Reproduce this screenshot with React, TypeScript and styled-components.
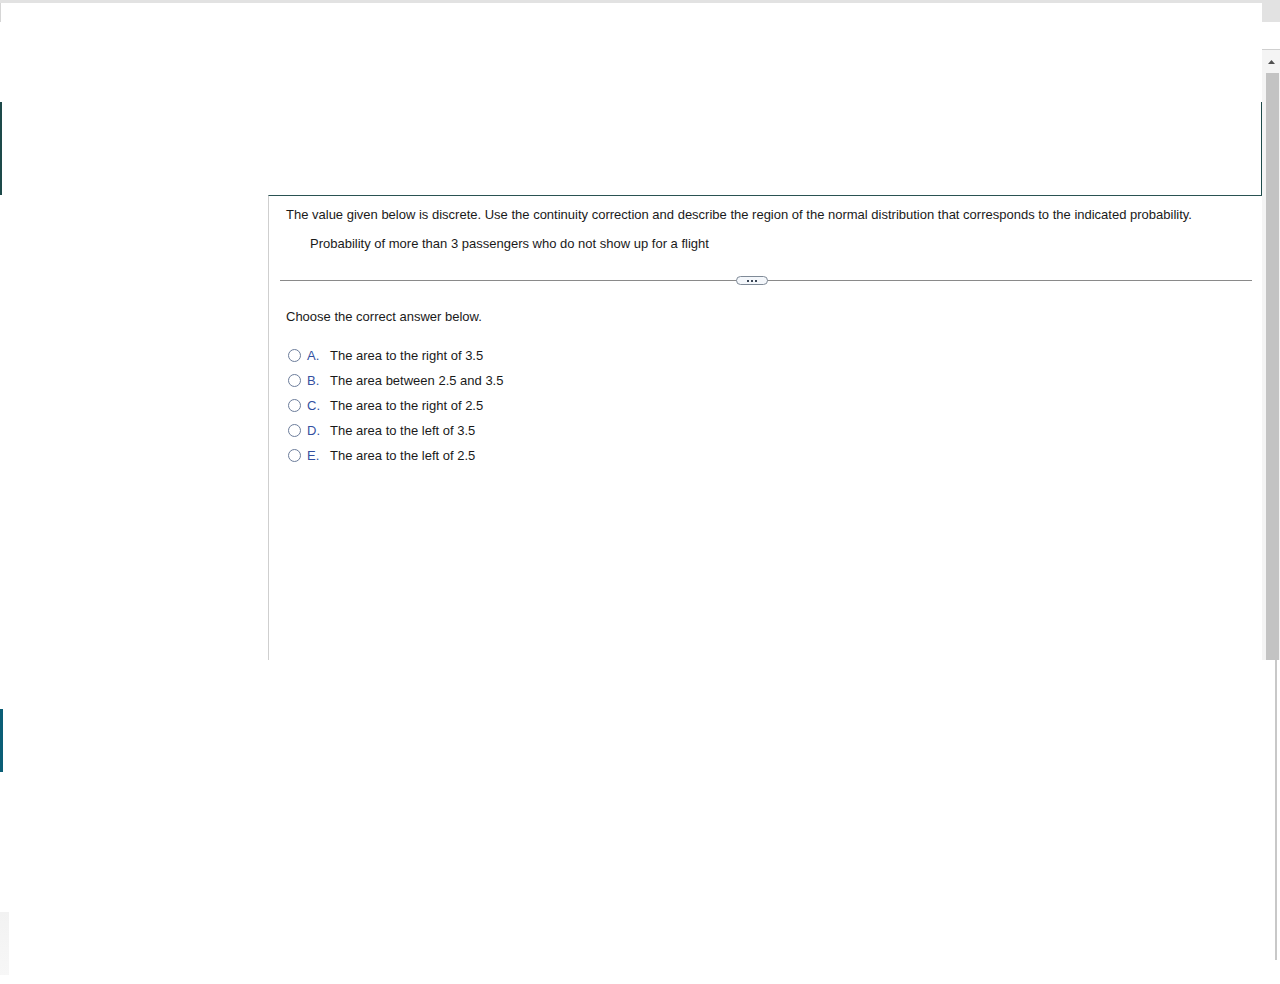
import React from 'react';
import styled, { createGlobalStyle } from 'styled-components';

const GlobalStyle = createGlobalStyle`
  html, body {
    margin: 0;
    padding: 0;
    background: #fff;
    overflow: hidden;
  }
  body {
    font-family: "Liberation Sans", Arial, sans-serif;
  }
`;

const Page = styled.div`
  display: flex;
  width: 1280px;
  height: 984px;
  overflow: hidden;
`;

const Main = styled.div`
  width: 1262px;
  display: flex;
  flex-direction: column;
`;

const TopStrip = styled.div`
  height: 3px;
  background: #e2e2e2;
`;

const HeaderSpace = styled.div`
  height: 99px;
`;

const LeftNotch = styled.div`
  width: 1px;
  height: 19px;
  background: #d6d6d6;
`;

const FrameBox = styled.div`
  height: 93px;
  border-left: 2px solid #1d4a4a;
  border-right: 1px solid #1d4a4a;
`;

const QuestionPanel = styled.div`
  box-sizing: border-box;
  margin-left: 268px;
  height: 465px;
  border-top: 1px solid #2a5252;
  border-left: 1px solid #cfcfcf;
  padding: 12px 10px 0 11px;
  color: #1a1a1a;
  font-size: 13px;
`;

const Prompt = styled.p`
  margin: 0 0 0 6px;
  line-height: 14px;
`;

const Detail = styled.p`
  margin: 15px 0 0 30px;
  line-height: 14px;
`;

const Divider = styled.div`
  position: relative;
  margin-top: 29px;
  height: 1px;
  background: #8a8a8a;
`;

const MoreButton = styled.div`
  position: absolute;
  left: 456px;
  top: -4px;
  width: 30px;
  height: 7px;
  border: 1px solid #7f8a97;
  border-radius: 5px;
  background: #f4f7fb;
  display: flex;
  align-items: center;
  justify-content: center;
  gap: 2px;
`;

const Dot = styled.span`
  width: 2px;
  height: 2px;
  background: #3b4656;
`;

const Instruction = styled.p`
  margin: 29px 0 0 6px;
  line-height: 14px;
`;

const OptionList = styled.div`
  margin-top: 24px;
  margin-left: 8px;
  display: flex;
  flex-direction: column;
  gap: 11px;
`;

const OptionRow = styled.label`
  display: flex;
  align-items: center;
  height: 14px;
`;

const Radio = styled.span`
  width: 11px;
  height: 11px;
  border: 1px solid #6c7d9b;
  border-radius: 50%;
  margin-right: 6px;
  background: #fff;
`;

const Letter = styled.span`
  width: 23px;
  color: #34509f;
`;

const TealMark = styled.div`
  margin-top: 49px;
  width: 3px;
  height: 63px;
  background: #0b5e76;
`;

const GreyBlock = styled.div`
  margin-top: 140px;
  width: 9px;
  height: 63px;
  background: linear-gradient(#f2f2f2, #f7f7f7);
`;

const ScrollColumn = styled.div`
  width: 18px;
  display: flex;
  flex-direction: column;
`;

const ScrollTop = styled.div`
  height: 22px;
  background: #e2e2e2;
`;

const ScrollGap = styled.div`
  height: 27px;
`;

const ScrollTrack = styled.div`
  border-top: 1px solid #cfcfcf;
  background: #f4f4f4;
  height: 610px;
  display: flex;
  flex-direction: column;
  align-items: center;
`;

const ArrowButton = styled.div`
  height: 23px;
  display: flex;
  align-items: center;
  justify-content: center;
`;

const Thumb = styled.div`
  width: 13px;
  height: 587px;
  margin-left: 2px;
  background: #c3c3c3;
`;

const ThinRail = styled.div`
  margin-left: 13px;
  width: 2px;
  height: 300px;
  background: #c8c8c8;
`;

const options = [
  { key: 'A', text: 'The area to the right of 3.5' },
  { key: 'B', text: 'The area between 2.5 and 3.5' },
  { key: 'C', text: 'The area to the right of 2.5' },
  { key: 'D', text: 'The area to the left of 3.5' },
  { key: 'E', text: 'The area to the left of 2.5' },
];

const App = () => {
  return (
    <React.Fragment>
      <GlobalStyle />
      <Page>
        <Main>
          <TopStrip />
          <HeaderSpace>
            <LeftNotch />
          </HeaderSpace>
          <FrameBox />
          <QuestionPanel>
            <Prompt>
              The value given below is discrete. Use the continuity correction and describe the region of the normal
              distribution that corresponds to the indicated probability.
            </Prompt>
            <Detail>Probability of more than 3 passengers who do not show up for a flight</Detail>
            <Divider>
              <MoreButton>
                <Dot />
                <Dot />
                <Dot />
              </MoreButton>
            </Divider>
            <Instruction>Choose the correct answer below.</Instruction>
            <OptionList>
              {options.map((o) => (
                <OptionRow key={o.key}>
                  <Radio />
                  <Letter>{o.key}.</Letter>
                  <span>{o.text}</span>
                </OptionRow>
              ))}
            </OptionList>
          </QuestionPanel>
          <TealMark />
          <GreyBlock />
        </Main>
        <ScrollColumn>
          <ScrollTop />
          <ScrollGap />
          <ScrollTrack>
            <ArrowButton>
              <svg width="7" height="4" viewBox="0 0 7 4">
                <polygon points="0,4 7,4 3.5,0" fill="#505050" />
              </svg>
            </ArrowButton>
            <Thumb />
          </ScrollTrack>
          <ThinRail />
        </ScrollColumn>
      </Page>
    </React.Fragment>
  );
};

export default App;
